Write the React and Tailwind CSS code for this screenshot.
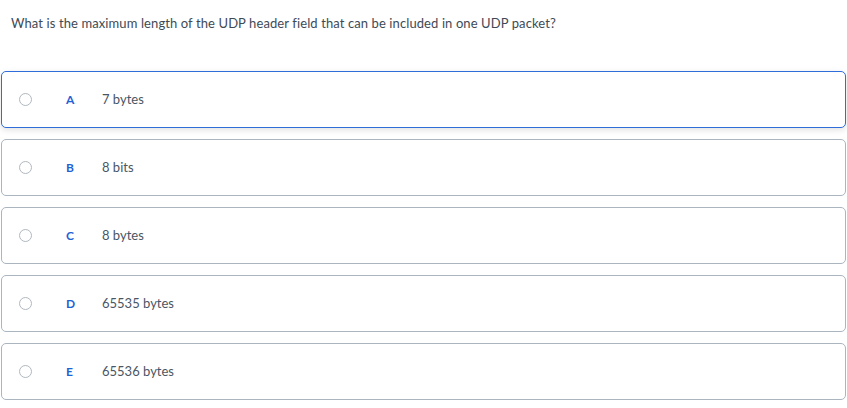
const options = [
  { key: "A", text: "7 bytes", selected: true },
  { key: "B", text: "8 bits" },
  { key: "C", text: "8 bytes" },
  { key: "D", text: "65535 bytes" },
  { key: "E", text: "65536 bytes" },
];

export default function App() {
  return (
    <div className="min-h-screen bg-white font-['Lato','Liberation_Sans',sans-serif]">
      <p className="pl-[11px] pt-[15px] text-[13px] leading-[16px] tracking-[0.1px] text-[#3e4a56]">
        What is the maximum length of the UDP header field that can be included in one UDP packet?
      </p>
      <div className="mt-[40px] flex flex-col gap-[11px] px-px">
        {options.map((o) => (
          <div
            key={o.key}
            className={
              o.selected
                ? "flex h-[57px] items-center rounded-[5px] border border-[#2f6ddb] bg-white shadow-[0_2px_6px_rgba(0,0,0,0.12)]"
                : "flex h-[57px] items-center rounded-[5px] border border-[#aab5bf] bg-white"
            }
          >
            <span className="ml-[17px] h-[13px] w-[13px] rounded-full border-[1.5px] border-[#b0b8c0]" />
            <span className="ml-[34px] w-[36px] text-[12px] font-bold text-[#1f62d6]">{o.key}</span>
            <span className="text-[13px] text-[#4a5663]">{o.text}</span>
          </div>
        ))}
      </div>
    </div>
  );
}
